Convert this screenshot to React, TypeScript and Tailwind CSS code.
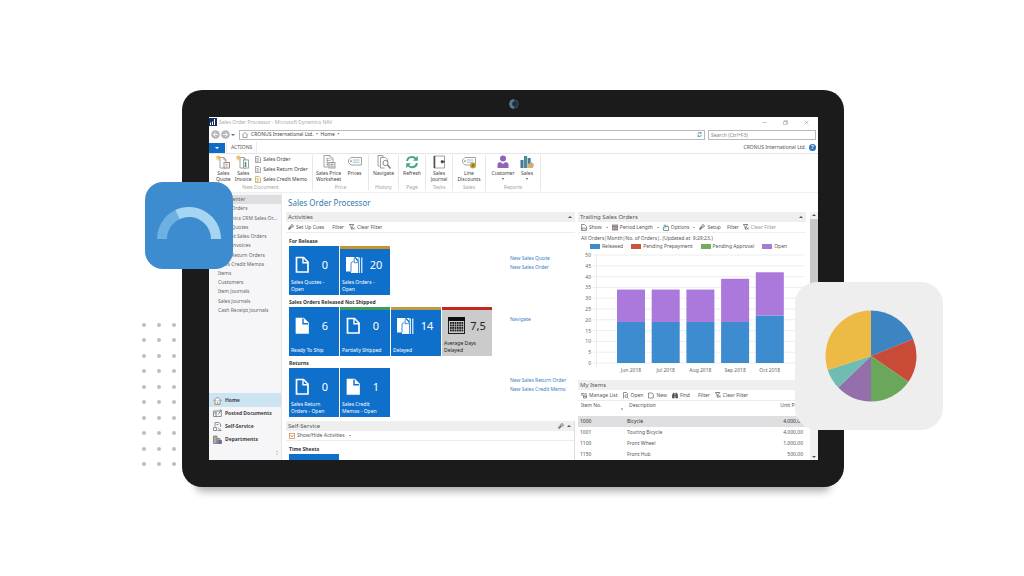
import React from 'react';

const outlinePage = 'M1.500 1.500h7l4.500 4.500v10H1.500z';

interface CueTile {
    label: string;
    value: string;
    icon: 'outline' | 'solid' | 'stack' | 'calendar';
    strip?: string;
}

interface CueGroup {
    title: string;
    tiles: CueTile[];
    links: string[];
}

const cueGroups: CueGroup[] = [
    {
        title: 'For Release',
        tiles: [
            { label: 'Sales Quotes - Open', value: '0', icon: 'outline' },
            { label: 'Sales Orders - Open', value: '20', icon: 'stack', strip: 'border-[#cb932b]' },
        ],
        links: ['New Sales Quote', 'New Sales Order'],
    },
    {
        title: 'Sales Orders Released Not Shipped',
        tiles: [
            { label: 'Ready To Ship', value: '6', icon: 'solid' },
            { label: 'Partially Shipped', value: '0', icon: 'outline', strip: 'border-[#3d9a5b]' },
            { label: 'Delayed', value: '14', icon: 'stack', strip: 'border-[#bd9a45]' },
            { label: 'Average Days Delayed', value: '7,5', icon: 'calendar', strip: 'border-[#c0291c]' },
        ],
        links: ['Navigate'],
    },
    {
        title: 'Returns',
        tiles: [
            { label: 'Sales Return Orders - Open', value: '0', icon: 'outline' },
            { label: 'Sales Credit Memos - Open', value: '1', icon: 'solid' },
        ],
        links: ['New Sales Return Order', 'New Sales Credit Memo'],
    },
];

const sideLinks = ['Role Center', 'Sales Orders', 'Dynamics CRM Sales Or...', 'Sales Quotes', 'Blanket Sales Orders', 'Sales Invoices', 'Sales Return Orders', 'Sales Credit Memos', 'Items', 'Customers', 'Item Journals', 'Sales Journals', 'Cash Receipt Journals'];

const months = [
    { name: 'Jun 2018', released: 19, open: 15 },
    { name: 'Jul 2018', released: 19, open: 15 },
    { name: 'Aug 2018', released: 19, open: 15 },
    { name: 'Sep 2018', released: 19, open: 20 },
    { name: 'Oct 2018', released: 22, open: 20 },
];

const items = [
    { no: '1000', description: 'Bicycle', price: '4.000,00' },
    { no: '1001', description: 'Touring Bicycle', price: '4.000,00' },
    { no: '1100', description: 'Front Wheel', price: '1.000,00' },
    { no: '1150', description: 'Front Hub', price: '500,00' },
];

const slices = [
    { from: 0, to: 68, color: '#3d84c3' },
    { from: 68, to: 124.5, color: '#c74b37' },
    { from: 124.5, to: 180, color: '#6ba75a' },
    { from: 180, to: 226, color: '#936fab' },
    { from: 226, to: 252, color: '#6fbcb2' },
    { from: 252, to: 360, color: '#edba45' },
];

const pieSlice = (from: number, to: number) => {
    const point = (deg: number) => {
        const a = (deg * Math.PI) / 180;
        return `${46 + 45.5 * Math.sin(a)} ${46 - 45.5 * Math.cos(a)}`;
    };
    return `M46 46L${point(from)}A45.500 45.500 0 0 1 ${point(to)}Z`;
};

/* ---------- icons ---------- */

const TileIcon = ({ kind }: { kind: CueTile['icon'] }) => {
    if (kind === 'calendar') {
        return (
            <svg className="h-[17px] w-[17px]" viewBox="0 0 17 17">
                <rect x="0.5" y="0.5" width="16" height="16" fill="none" stroke="#1c1c1c" />
                <rect width="17" height="4" fill="#0c0c0c" />
                {[5, 7.5, 10, 12.5].map(y => [2, 4.300, 6.600, 8.900, 11.200, 13.500].map(x => (
                    <rect key={`${x}-${y}`} x={x} y={y} width="1.7" height="1.9" fill="#1c1c1c" />
                )))}
            </svg>
        );
    }
    if (kind === 'stack') {
        return (
            <svg className="h-[17px] w-[17px]" viewBox="0 0 17 17">
                <path d="M0 1h8l4 5v11H5V15.500H0z" fill="#fff" />
                <path d="M5 15.500V7L7.500 5M8.200 2v4.700H12" fill="none" stroke="#0f70cb" strokeWidth="0.800" />
                <path d="M13.300 1.500V17M15.800 1.500V17" fill="none" stroke="#fff" strokeWidth="1.100" />
                <path d="M9.500 1l3 3V1z" fill="#fff" />
            </svg>
        );
    }
    return (
        <svg className="h-[17px] w-[15px]" viewBox="0 0 15 17">
            <path d={outlinePage} fill={kind === 'solid' ? '#fff' : 'none'} stroke="#fff" strokeWidth="1.700" />
            <path d="M8 1.500V6.700H13" fill="none" stroke={kind === 'solid' ? '#0f70cb' : '#fff'} strokeWidth="1.4" />
        </svg>
    );
};

const RibbonIcon = ({ name }: { name: string }) => (
    <svg className="h-[14px] w-[14px]" viewBox="0 0 14 14" fill="none" stroke="#979797" strokeWidth="0.9">
        {(name === 'Sales Quote' || name === 'Sales Invoice') && (
            <>
                <path d="M4 2.500h4l2 2V13H4zM8 2v3h2" />
                <path d="M0.500 1l3.500 3.500M4 1L0.500 4.500M2.300 0v5.500M0 2.700h5" stroke="#ecb44f" />
                {name === 'Sales Quote'
                    ? <><rect x="8" y="7.500" width="5.500" height="5.500" fill="#fff" stroke="#9a7f78" /><path d="M9 9.500h3.500M9 11h3.500M10.700 8v5" stroke="#b39c94" strokeWidth="0.500" /></>
                    : <><rect x="7.500" y="5" width="5" height="8" fill="#fff" /><path d="M9.500 7v5" stroke="#3f9c6b" strokeWidth="1.6" /></>}
            </>
        )}
        {name === 'Sales Price Worksheet' && (
            <>
                <path d="M2 0.500h6l3 3V12H2z" />
                <path d="M8 0.500V4h3M4 3.500h3M4 5.500h5M4 7.500h5M4 9.500h5M5.500 3v8" strokeWidth="0.6" />
                <rect x="7" y="7.500" width="6" height="5.500" fill="#f0f0f0" />
                <path d="M8 9.500h4M8 11.300h4M10 8v4.500" strokeWidth="0.6" />
            </>
        )}
        {(name === 'Prices' || name === 'Line Discounts') && (
            <>
                <path d="M3 2.500h10.500v7.500H3L0.500 7.500v-2.500z" />
                <circle cx="3" cy="6.200" r="0.7" />
                <path d="M5 5h6.500M5 7.300h6.500" stroke="#78a2ba" strokeWidth="0.7" />
                {name === 'Line Discounts' && (
                    <>
                        <circle cx="11" cy="10.500" r="3" fill="#c7aa35" stroke="none" />
                        <path d="M9.800 12l2.500-3M9.800 9.500h.6M11.700 11.600h.6" stroke="#453a18" strokeWidth="0.8" />
                    </>
                )}
            </>
        )}
        {name === 'Navigate' && (
            <>
                <path d="M1 0.500h5v2M1 0.500V11h1.500M3.500 2.500h5l2 2V7M3.500 2.500V13h4" />
                <circle cx="8.500" cy="8" r="2.600" fill="#fff" stroke="#777" />
                <path d="M10.500 10l3 3.500" stroke="#777" strokeWidth="1.3" />
            </>
        )}
        {name === 'Refresh' && (
            <>
                <path d="M2 6A5 4.800 0 0 1 11 4M12 8a5 4.800 0 0 1-9 2.200" stroke="#4aa58a" strokeWidth="1.900" />
                <path d="M12.800 0.800v5H8zM1.200 13.200v-5H6z" fill="#4aa58a" stroke="none" />
            </>
        )}
        {name === 'Sales Journal' && (
            <>
                <path d="M2 1h10.500v12H2z" />
                <path d="M2.500 1v12" stroke="#555" strokeWidth="1.6" />
                <circle cx="10.300" cy="6.700" r="1.700" fill="#666" stroke="none" />
                <path d="M9 6.700h4" stroke="#333" />
            </>
        )}
        {name === 'Customer' && (
            <g fill="#9163b6" stroke="none">
                <circle cx="7" cy="3.400" r="3" />
                <path d="M1.500 13V9.500Q1.500 7.300 4 7.300h1L7 9l2-1.700h1q2.500 0 2.500 2.200V13z" />
            </g>
        )}
        {name === 'Sales' && (
            <g stroke="none">
                <rect x="0.500" y="5" width="3" height="8" fill="#44789b" />
                <rect x="4" y="1" width="3.200" height="12" fill="#4b8d91" />
                <rect x="7.700" y="3" width="3" height="10" fill="#457ba5" />
                <path d="M7 10l4-3 3 2-1 4H8z" fill="#d8b77f" />
                <path d="M9 10l3-2M10 12l3-2" stroke="#a98547" strokeWidth="0.6" />
            </g>
        )}
    </svg>
);

const DocIcon = ({ tint = '#858585' }: { tint?: string }) => (
    <svg className="h-[7px] w-[6px] shrink-0" viewBox="0 0 6 7" fill="none" stroke={tint} strokeWidth="0.7">
        <path d="M0.500 0.500h3.500l1.500 1.500v4.500h-5zM1.500 2.500h2M1.500 4h3M1.500 5.300h2" />
    </svg>
);

const WrenchIcon = () => (
    <svg className="h-[6px] w-[6px] shrink-0" viewBox="0 0 6 6" fill="none" stroke="#6e6e6e">
        <path d="M0.500 5.500L3 3" strokeWidth="1.2" />
        <circle cx="4" cy="2" r="1.300" strokeWidth="0.800" />
        <circle cx="1.800" cy="4" r="1" strokeWidth="0.600" />
    </svg>
);

const ClearIcon = () => (
    <svg className="h-[6px] w-[6px] shrink-0" viewBox="0 0 6 6" fill="none" stroke="#666" strokeWidth="0.800">
        <path d="M0.300 0.500h4.500L3 2.800v2.500L2 4.500V2.800zM3.700 3.500l2 2M5.700 3.500l-2 2" />
    </svg>
);

const ToolIcon = ({ name }: { name: string }) => {
    if (name === 'wrench') return <WrenchIcon />;
    if (name === 'clear') return <ClearIcon />;
    return (
        <svg className="h-[7px] w-[6px] shrink-0" viewBox="0 0 6 7" fill="none" stroke="#777" strokeWidth="0.8">
            {name === 'show' && <path d="M0.500 0.500h3l2 2v4h-5zM1.500 5.500v-2M3 5.500V3M4.300 5.500V4" />}
            {name === 'period' && <><rect x="0.400" y="1" width="5.200" height="5" fill="#d9b6c4" /><path d="M0.500 2.500h5M2.200 2.500v3.500M4 2.500v3.500" /></>}
            {name === 'options' && <><path d="M0.500 3v3.500h5V2.500H3" /><path d="M2 0.500v4M0.500 2h4" stroke="#3f8ba1" /></>}
            {name === 'manage' && <path d="M0 1.500h3M0 3h2M2.500 3h3v3h-3zM2.500 4.500h3M3.500 1.500h2" />}
            {name === 'open' && <><path d="M0.500 6.500v-6h3l1 1v1.500" /><circle cx="3.300" cy="4.200" r="1.300" /><path d="M4.200 5.200l1.500 1.500" /></>}
            {name === 'new' && <path d="M0.500 1h3.500l1.300 1.300V6H0.500z" />}
            {name === 'find' && <path d="M0.500 6V3l1-2h.7v5zM5.500 6V3l-1-2h-.7v5zM2 3.500h2" fill="#555" stroke="#555" />}
        </svg>
    );
};

const NavIcon = ({ name }: { name: string }) => (
    <svg className="h-[9px] w-[9px] shrink-0" viewBox="0 0 9 9" fill="none" stroke="#7f8489" strokeWidth="0.900">
        {name === 'Home' && <><path d="M0.500 5L4.500 1l4 4M2 4v4.500h5V4" fill="#fff" /><path d="M4.500 5.500v3" stroke="#dd9d55" strokeWidth="1.400" /></>}
        {name === 'Posted Documents' && <><path d="M0.500 2h7.800v5.500H0.500zM3 2v5.500M0.500 4h3" /><path d="M5 5.500l3-4M6.500 1h1.800v2" /></>}
        {name === 'Self-Service' && <path d="M2 0.500h4l1.500 1.500v3M2 0.500v4M0.500 8.500V5.500h3v3zM5 6l3 2.500M4.500 8.500h4M3.500 2.500h2" />}
        {name === 'Departments' && <><path d="M0.500 1h3.500v7.500H0.500zM4 3.500h3v5H4z" fill="#a9abb3" /><path d="M5.500 5.500h3v3h-3z" fill="#75669b" stroke="#75669b" /><path d="M1.300 2.500h2M1.300 4.500h2" stroke="#c8a43e" /></>}
    </svg>
);

/* ---------- window chrome ---------- */

const TitleBar = () => (
    <div className="flex h-[10px] items-center text-[#ababab]">
        <svg className="mr-[2px] h-[8px] w-[8px]" viewBox="0 0 8 8">
            <rect width="8" height="8" fill="#12305f" />
            <path d="M1.500 7V4.500M3.500 7V3.500M5.500 7V1" stroke="#fff" />
        </svg>
        <span>Sales Order Processor - Microsoft Dynamics NAV</span>
        <div className="ml-auto mr-[9px] flex gap-4">
            <button aria-label="Minimize">
                <svg className="h-[5px] w-[5px]" viewBox="0 0 6 6" stroke="#999" strokeWidth="0.700"><path d="M0.500 3h5" /></svg>
            </button>
            <button aria-label="Restore">
                <svg className="h-[5px] w-[5px]" viewBox="0 0 6 6" fill="none" stroke="#999" strokeWidth="0.700"><path d="M0.500 2h4v3.500h-4zM1.500 2V0.800h4v3.700h-1" /></svg>
            </button>
            <button aria-label="Close">
                <svg className="h-[5px] w-[5px]" viewBox="0 0 6 6" stroke="#999" strokeWidth="0.700"><path d="M0.800 0.800l4.400 4.400M5.200 0.800L0.800 5.200" /></svg>
            </button>
        </div>
    </div>
);

const AddressBar = () => (
    <div className="flex h-[15px] items-center pl-[2px] pr-[2px]">
        {['Back', 'Forward'].map(label => (
            <button key={label} aria-label={label} className="mr-[1px]">
                <svg className="h-[9px] w-[9px]" viewBox="0 0 9 9" fill="none">
                    <circle cx="4.500" cy="4.500" r="4.300" fill="#b7b7b7" />
                    <path d={label === 'Back' ? 'M7 4.500H2.500M4.500 2.500l-2 2 2 2' : 'M2 4.500h4.500M4.500 2.500l2 2-2 2'} stroke="#fff" strokeWidth="0.900" />
                </svg>
            </button>
        ))}
        <span className="h-0 w-0 border-x-2 border-t-2 border-x-transparent border-t-[#3c7a9e]" />
        <div className="ml-1 flex h-[10px] flex-1 items-center border border-[#b9b9b9] pl-[2px] pr-[2px]">
            <svg className="mr-[3px] h-[6px] w-[6px]" viewBox="0 0 6 6" fill="none" stroke="#777" strokeWidth="0.700"><path d="M0.300 3L3 0.500 5.700 3M1 2.500v3h4v-3" /></svg>
            <span className="text-[#444]">CRONUS International Ltd.&nbsp; •&nbsp; Home&nbsp; •</span>
            <svg className="ml-auto h-[5px] w-[5px]" viewBox="0 0 14 14" fill="none" stroke="#3d8fa8" strokeWidth="2.200"><path d="M2 6a5 5 0 0 1 9-3M12 8a5 5 0 0 1-9 3M11.500 0v4H8M2.500 14v-4H6" /></svg>
        </div>
        <input aria-label="Search" placeholder="Search (Ctrl+F3)" className="ml-[3px] h-[10px] w-[108px] border border-[#b9b9b9] pl-[2px] placeholder:text-[#868686]" />
    </div>
);

const RibbonButton = ({ name, width, caret }: { name: string; width: string; caret?: boolean }) => (
    <button className={`flex flex-col items-center ${width}`}>
        <RibbonIcon name={name} />
        <span className="mt-[1px] text-center leading-[6px]">{name}</span>
        {caret && <span className="mt-[2px] h-0 w-0 border-x-1 border-t-2 border-x-transparent border-t-[#555]" />}
    </button>
);

const RibbonGroup = ({ title, width, children }: { title: string; width: string; children: React.ReactNode }) => (
    <div className={`flex h-[36px] flex-col justify-between border-r border-[#e8e8e8] ${width}`}>
        <div className="flex justify-center">{children}</div>
        <span className="text-center leading-[7px] text-[#a5a5a5]">{title}</span>
    </div>
);

const Ribbon = () => (
    <>
        <div className="flex h-[12px] items-center border-b border-[#e5e5e5]">
            <button aria-label="Application menu" className="flex h-[10px] w-4 items-center justify-center bg-[#0f6cc4]">
                <span className="h-0 w-0 border-x-2 border-t-2 border-x-transparent border-t-white" />
            </button>
            <button className="ml-[1px] h-[11px] border-x border-[#ececec] px-1">ACTIONS</button>
            <span className="ml-auto">CRONUS International Ltd.</span>
            <button aria-label="Help" className="ml-[3px] mr-[2px] flex h-[7px] w-[7px] items-center justify-center rounded-full bg-[#2f76b8] font-bold text-white">?</button>
        </div>
        <div className="flex h-[39px] border-b border-[#f0f0f0] pt-[1px] text-[#444]">
            <RibbonGroup title="New Document" width="w-[104px]">
                <RibbonButton name="Sales Quote" width="w-5" />
                <RibbonButton name="Sales Invoice" width="w-5" />
                <div className="ml-[2px] flex flex-col gap-[2px]">
                    {['Sales Order', 'Sales Return Order', 'Sales Credit Memo'].map((label, i) => (
                        <button key={label} className="flex h-2 items-center gap-[2px] whitespace-nowrap">
                            <DocIcon tint={i === 2 ? '#c39a52' : '#858585'} />
                            {label}
                        </button>
                    ))}
                </div>
            </RibbonGroup>
            <RibbonGroup title="Price" width="w-[56px]">
                <RibbonButton name="Sales Price Worksheet" width="w-7" />
                <RibbonButton name="Prices" width="w-6" />
            </RibbonGroup>
            <RibbonGroup title="History" width="w-[30px]"><RibbonButton name="Navigate" width="w-7" /></RibbonGroup>
            <RibbonGroup title="Page" width="w-[27px]"><RibbonButton name="Refresh" width="w-6" /></RibbonGroup>
            <RibbonGroup title="Tasks" width="w-[27px]"><RibbonButton name="Sales Journal" width="w-6" /></RibbonGroup>
            <RibbonGroup title="Sales" width="w-[33px]"><RibbonButton name="Line Discounts" width="w-7" /></RibbonGroup>
            <RibbonGroup title="Reports" width="w-[55px]">
                <RibbonButton name="Customer" width="w-7" caret />
                <RibbonButton name="Sales" width="w-5" caret />
            </RibbonGroup>
        </div>
    </>
);

const Sidebar = () => (
    <nav className="flex w-[73px] shrink-0 flex-col border-r border-[#e6e6ea] bg-[#f6f6f8] pt-[2px] text-[#666]">
        <div className="flex h-[120px] flex-col">
            {sideLinks.map((label, i) => (
                <a key={label} href="#" className={`flex flex-1 items-center whitespace-nowrap pl-[9px] ${i === 0 ? 'bg-[#dedee1]' : ''}`}>{label}</a>
            ))}
        </div>
        <div className="mt-auto font-bold text-[#444]">
            {['Home', 'Posted Documents', 'Self-Service', 'Departments'].map((label, i) => (
                <a key={label} href="#" className={`flex items-center gap-[3px] whitespace-nowrap pl-1 ${i === 0 ? 'h-[14px] bg-[#cde4f3]' : 'h-[13px]'}`}>
                    <NavIcon name={label} />
                    {label}
                </a>
            ))}
        </div>
        <button aria-label="Configure buttons" className="flex h-[14px] items-center justify-end pr-[3px]">
            <svg className="h-[4px] w-[2px]" viewBox="0 0 2 4" stroke="#999"><path d="M1 0v1M1 2.500v1" /></svg>
        </button>
    </nav>
);

/* ---------- panels ---------- */

const Caret = () => <span className="h-0 w-0 border-x-2 border-b-2 border-x-transparent border-b-[#555]" />;

const PanelHeader = ({ title, tools }: { title: string; tools?: boolean }) => (
    <header className="flex h-[10px] items-center bg-[#efeff0] pl-[2px] pr-[3px]">
        <h2 className="text-[6px] leading-[10px] text-[#555]">{title}</h2>
        <div className="ml-auto flex items-center gap-[3px]">
            {tools && <WrenchIcon />}
            <Caret />
        </div>
    </header>
);

const Tool = ({ icon, label, menu, muted }: { icon?: string; label: string; menu?: boolean; muted?: boolean }) => (
    <button className={`flex items-center gap-[2px] whitespace-nowrap ${muted ? 'text-[#999]' : ''}`}>
        {icon && <ToolIcon name={icon} />}
        {label}
        {menu && <span className="mx-[2px] h-0 w-0 border-x-1 border-t-1 border-x-transparent border-t-[#555]" />}
    </button>
);

const Activities = () => (
    <section className="flex min-w-0 flex-col">
        <PanelHeader title="Activities" />
        <div className="flex h-[11px] items-center gap-[8px] border-b border-[#ececec] pl-[2px]">
            <Tool icon="wrench" label="Set Up Cues" />
            <div className="flex gap-[5px]">
                <Tool label="Filter" />
                <Tool icon="clear" label="Clear Filter" />
            </div>
        </div>
        <div className="pl-[3px] pt-[1px]">
            {cueGroups.map(group => (
                <div key={group.title}>
                    <h3 className="h-[12px] pt-[2px] font-bold leading-[10px] text-[#333]">{group.title}</h3>
                    <div className="flex">
                        <div className="flex w-[221px] gap-[1px]">
                            {group.tiles.map(tile => (
                                <button
                                    key={tile.label}
                                    className={`flex h-[49px] w-[50px] flex-col border-t-3 px-[2px] pb-[2px] text-left ${tile.strip || 'border-[#0f70cb]'} ${tile.icon === 'calendar' ? 'bg-[#cbcbcb] text-[#222]' : 'bg-[#0f70cb] text-white'}`}
                                >
                                    <span className="flex w-full items-center justify-between pl-[4px] pr-[2px] pt-[7px]">
                                        <TileIcon kind={tile.icon} />
                                        <span className="w-5 text-center text-[11px] leading-[17px]">{tile.value}</span>
                                    </span>
                                    <span className="mt-auto leading-[7px]">{tile.label}</span>
                                </button>
                            ))}
                        </div>
                        <div className="flex flex-col items-start pt-2 text-[#3a82c4]">
                            {group.links.map(link => <a key={link} href="#" className="leading-[9px]">{link}</a>)}
                        </div>
                    </div>
                </div>
            ))}
        </div>
        <div className="mt-1 flex-1 border-r border-[#dcdce0]">
            <PanelHeader title="Self-Service" tools />
            <div className="flex h-[10px] items-center border-b border-[#ececec] pl-[3px]">
                <button className="flex items-center gap-[2px]">
                    <svg className="h-[6px] w-[6px]" viewBox="0 0 6 6" fill="none" stroke="#cf7f4b"><rect x="0.500" y="0.500" width="5" height="5" strokeWidth="0.700" /><path d="M1.500 2l1.500 2L4.500 2" strokeWidth="0.800" /></svg>
                    Show/Hide Activities
                    <span className="ml-[2px] h-0 w-0 border-x-1 border-t-1 border-x-transparent border-t-[#555]" />
                </button>
            </div>
            <h3 className="ml-[3px] mt-[3px] font-bold leading-[10px] text-[#333]">Time Sheets</h3>
            <button aria-label="Time sheet cue" className="ml-[3px] block h-[6px] w-[50px] bg-[#0f70cb]" />
        </div>
    </section>
);

const OrdersChart = () => (
    <svg className="block w-full" viewBox="0 0 228 127" fontSize="5" fill="#666" role="img" aria-label="Trailing sales orders">
        {[0, 5, 10, 15, 20, 25, 30, 35, 40, 45, 50].map(tick => {
            const y = 112 - tick * 2.16;
            return (
                <g key={tick}>
                    <path d={`M15 ${y}H226`} stroke="#e3e6e8" strokeWidth="0.700" />
                    <text x="13" y={y + 2} textAnchor="end">{tick}</text>
                </g>
            );
        })}
        <path d="M18.500 4v112" stroke="#e3e6e8" strokeWidth="0.700" />
        {months.map((m, i) => {
            const x = 39 + i * 34.700;
            return (
                <g key={m.name}>
                    <rect x={x} y={112 - m.released * 2.16} width="28" height={m.released * 2.16} fill="#3d8cd0" />
                    <rect x={x} y={112 - (m.released + m.open) * 2.16} width="28" height={m.open * 2.16} fill="#ab78dc" />
                    <text x={x + 14} y="121" textAnchor="middle">{m.name}</text>
                </g>
            );
        })}
    </svg>
);

const RightColumn = () => (
    <section className="min-w-0">
        <PanelHeader title="Trailing Sales Orders" />
        <div className="flex h-[11px] items-center gap-[2px] border-b border-[#f0f0f0] pl-[3px]">
            <Tool icon="show" label="Show" menu />
            <Tool icon="period" label="Period Length" menu />
            <Tool icon="options" label="Options" menu />
            <Tool icon="wrench" label="Setup" />
            <div className="ml-[4px] flex gap-[4px]">
                <Tool label="Filter" />
                <Tool icon="clear" label="Clear Filter" muted />
            </div>
        </div>
        <p className="pl-[3px] pt-[1px] leading-[8px]">All Orders|Month|No. of Orders|, (Updated at&nbsp; 9:29:23.)</p>
        <div className="flex h-[9px] items-center gap-[8px] whitespace-nowrap pl-[12px]">
            <span className="flex items-center gap-[2px]"><i className="h-[5px] w-[10px] bg-[#3d8cd0]" />Released</span>
            <span className="flex items-center gap-[2px]"><i className="h-[5px] w-[10px] bg-[#cd523f]" />Pending Prepayment</span>
            <span className="flex items-center gap-[2px]"><i className="h-[5px] w-[10px] bg-[#74ac62]" />Pending Approval</span>
            <span className="flex items-center gap-[2px]"><i className="h-[5px] w-[10px] bg-[#a67bd6]" />Open</span>
        </div>
        <OrdersChart />
        <div className="mt-[2px]">
            <PanelHeader title="My Items" />
        </div>
        <div className="flex h-[11px] items-center gap-[5px] border-b border-[#ececec] pl-[3px]">
            <Tool icon="manage" label="Manage List" />
            <Tool icon="open" label="Open" />
            <Tool icon="new" label="New" />
            <Tool icon="find" label="Find" />
            <div className="ml-[3px] flex gap-[5px]">
                <Tool label="Filter" />
                <Tool icon="clear" label="Clear Filter" />
            </div>
        </div>
        <table className="w-full leading-[9px]">
            <thead>
                <tr className="h-[15px] text-left align-top">
                    <th className="w-[49px] pl-[3px] font-normal">
                        <span className="flex items-end justify-between pr-[4px]">Item No.<span className="h-[2px] w-[2px] rounded-full bg-[#aaa]" /></span>
                    </th>
                    <th className="pl-[2px] font-normal">Description</th>
                    <th className="pr-[3px] text-right font-normal">Unit Price</th>
                </tr>
            </thead>
            <tbody>
                {items.map((item, i) => (
                    <tr key={item.no} className={`h-[11px] ${i === 0 ? 'bg-[#dfdee0] text-[#333]' : ''}`}>
                        <td className="pl-[2px]">{item.no}</td>
                        <td>{item.description}</td>
                        <td className="pr-[3px] text-right">{item.price}</td>
                    </tr>
                ))}
            </tbody>
        </table>
    </section>
);

const Scrollbar = () => (
    <div className="mt-[19px] ml-[4px] flex w-2 shrink-0 flex-col items-center justify-between bg-[#f1f1f3] pt-[2px] pb-[2px]">
        <div className="flex w-full flex-col items-center gap-[3px]">
            <Caret />
            <span className="h-[100px] w-full bg-[#c9c9cb]" />
        </div>
        <span className="h-0 w-0 border-x-2 border-t-2 border-x-transparent border-t-[#555]" />
    </div>
);

/* ---------- floating cards ---------- */

const GaugeBadge = () => (
    <div className="absolute top-[92px] -left-[37px] flex h-[87px] w-[88px] items-center justify-center rounded-[18px] bg-[#3d8cd0]">
        <svg className="mb-[5px] h-[32px] w-[64px]" viewBox="0 0 64 32">
            <path d="M0 32A32 32 0 0 1 18.200 3.100L22.500 12.200A22 22 0 0 0 10 32Z" fill="#6db0e3" />
            <path d="M18.200 3.100A32 32 0 0 1 64 32H54A22 22 0 0 0 22.500 12.200Z" fill="#a5d5f0" />
        </svg>
    </div>
);

const PieCard = () => (
    <div className="absolute top-[192px] -right-[99px] flex h-[148px] w-[148px] items-center justify-center rounded-[22px] bg-[#eeeeef]">
        <svg className="-mr-1 h-[92px] w-[92px]" viewBox="0 0 92 92">
            {slices.map(s => <path key={s.color} d={pieSlice(s.from, s.to)} fill={s.color} />)}
        </svg>
    </div>
);

const DotGrid = () => (
    <div className="absolute top-[233px] -left-[40px] grid h-[143px] grid-cols-3 content-between gap-x-[11px]">
        {Array.from({ length: 30 }, (_, i) => <span key={i} className="h-[4px] w-[4px] rounded-full bg-[#bdbdbd]" />)}
    </div>
);

export default function App() {
    return (
        <main className="min-h-screen overflow-hidden bg-white pt-[90px] pr-[180px] pl-[182px] font-['Noto_Sans','Open_Sans',sans-serif] text-[5px] leading-[7px] text-[#555]">
            <div className="relative rounded-[20px] bg-[#1b1b1c] pr-[26px] pb-[27px] pl-[27px] shadow-[0_18px_8px_-14px_rgba(0,0,0,0.35)]">
                <div className="flex h-[27px] items-center justify-center">
                    <svg className="h-[10px] w-[10px]" viewBox="0 0 10 10">
                        <circle cx="5" cy="5" r="4.800" fill="#2c4350" />
                        <path d="M5 0.200A4.800 4.800 0 0 0 5 9.800Z" fill="#5d7885" />
                        <circle cx="5.500" cy="5" r="2.400" fill="#16303d" />
                    </svg>
                </div>
                <div className="overflow-hidden bg-white">
                    <TitleBar />
                    <AddressBar />
                    <Ribbon />
                    <div className="flex">
                        <Sidebar />
                        <div className="ml-[4px] min-w-0 flex-1">
                            <h1 className="pl-[2px] text-[8px] leading-[19px] text-[#3479ae]">Sales Order Processor</h1>
                            <div className="grid grid-cols-[289fr_228fr] gap-[3px]">
                                <Activities />
                                <RightColumn />
                            </div>
                        </div>
                        <Scrollbar />
                    </div>
                </div>
                <GaugeBadge />
                <PieCard />
                <DotGrid />
            </div>
        </main>
    );
}
